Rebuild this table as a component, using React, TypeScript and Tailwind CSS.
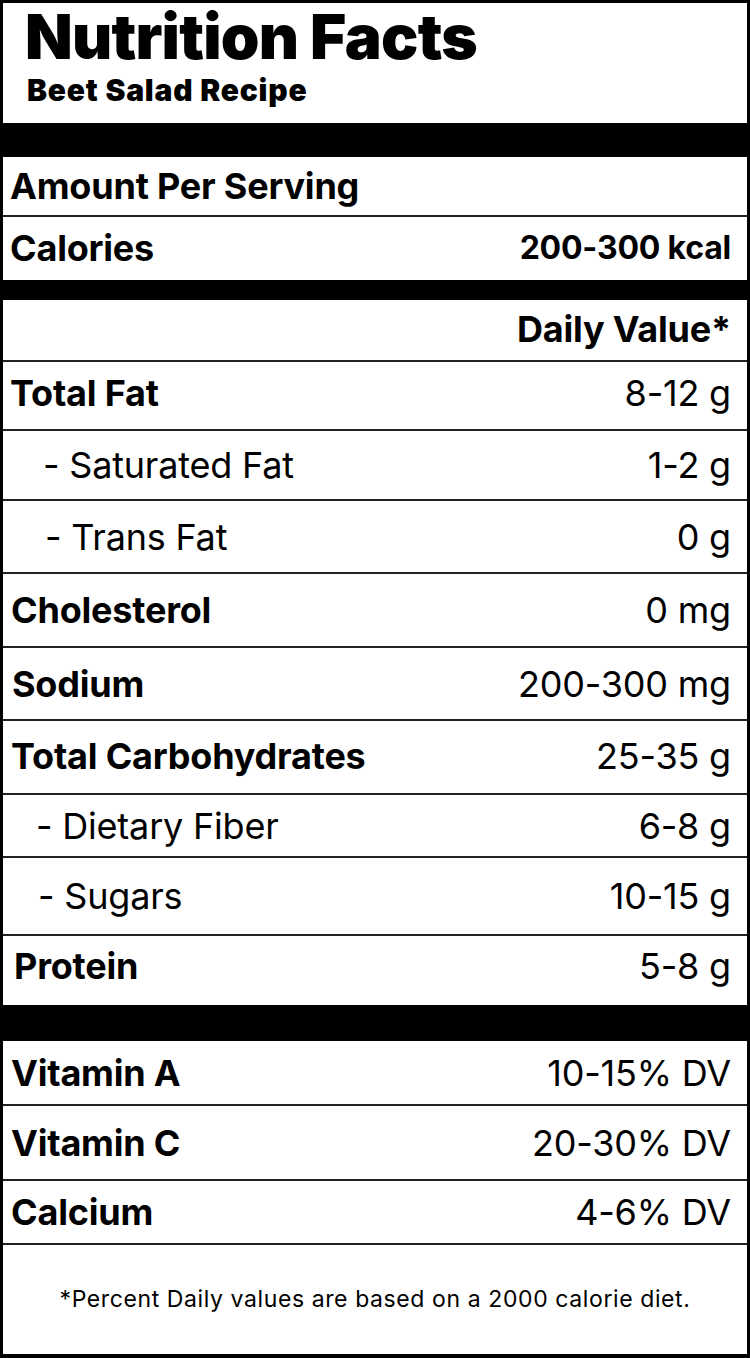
import React from 'react';

type Row = {
  label: string;
  value: string;
  bold: boolean;
  h: string; // row height class
  pad: string; // left padding + nudges
  line: boolean; // thin rule under the row
};

// Main nutrient rows, between the "Daily Value*" header and the protein bar
const nutrients: Row[] = [
  { label: 'Total Fat', value: '8-12 g', bold: true, h: 'h-[67px]', pad: 'pl-[7px] pb-[5px]', line: true },
  { label: '- Saturated Fat', value: '1-2 g', bold: false, h: 'h-[68px]', pad: 'pl-[40px]', line: true },
  { label: '- Trans Fat', value: '0 g', bold: false, h: 'h-[71px]', pad: 'pl-[42px]', line: true },
  { label: 'Cholesterol', value: '0 mg', bold: true, h: 'h-[72px]', pad: 'pl-[8px]', line: true },
  { label: 'Sodium', value: '200-300 mg', bold: true, h: 'h-[71px]', pad: 'pl-[9px]', line: true },
  { label: 'Total Carbohydrates', value: '25-35 g', bold: true, h: 'h-[72px]', pad: 'pl-[8px] pb-[3px]', line: true },
  { label: '- Dietary Fiber', value: '6-8 g', bold: false, h: 'h-[61px]', pad: 'pl-[33px]', line: true },
  { label: '- Sugars', value: '10-15 g', bold: false, h: 'h-[76px]', pad: 'pl-[35px]', line: true },
  { label: 'Protein', value: '5-8 g', bold: true, h: 'h-[69px]', pad: 'pl-[11px] pb-[9px]', line: false },
];

const vitamins: Row[] = [
  { label: 'Vitamin A', value: '10-15% DV', bold: true, h: 'h-[63px]', pad: 'pl-[8px]', line: true },
  { label: 'Vitamin C', value: '20-30% DV', bold: true, h: 'h-[73px]', pad: 'pl-[8px]', line: true },
  { label: 'Calcium', value: '4-6% DV', bold: true, h: 'h-[62px]', pad: 'pl-[8px]', line: true },
];

function FactRow({ row }: { row: Row }) {
  return (
    <>
      <div className={`flex items-center justify-between pr-[16px] ${row.h} ${row.pad}`}>
        <span className={`text-[36px] leading-none tracking-[-0.2px] ${row.bold ? 'font-bold' : 'font-normal'}`}>
          {row.label}
        </span>
        <span className="text-[36px] leading-none font-normal tracking-[-0.2px]">{row.value}</span>
      </div>
      {row.line && <div className="h-[2px] bg-[#222]" />}
    </>
  );
}

export default function App() {
  return (
    <div className="w-[750px] h-[1358px] bg-white text-black border-[3px] border-b-4 border-black flex flex-col font-['Inter',sans-serif]">
      {/* Header */}
      <div className="h-[120px] pl-[22px] flex flex-col">
        <h1 className="font-black text-[62px] leading-[68px] tracking-[-0.75px]">Nutrition Facts</h1>
        <p className="font-black text-[30px] leading-[32px] tracking-[0.8px] pl-[2px] pt-[3px]">Beet Salad Recipe</p>
      </div>

      <div className="h-[34px] bg-black" />

      <div className="h-[58px] flex items-center pl-[7px]">
        <span className="text-[36px] leading-none font-bold tracking-[-0.2px]">Amount Per Serving</span>
      </div>
      <div className="h-[2px] bg-[#222]" />
      <div className="h-[63px] flex items-center justify-between pl-[7px] pr-[16px] pb-[2px]">
        <span className="text-[36px] leading-none font-bold tracking-[-0.2px]">Calories</span>
        <span className="text-[32px] leading-none font-bold tracking-[-0.2px]">200-300 kcal</span>
      </div>

      <div className="h-[20px] bg-black" />

      <div className="h-[60px] flex items-center justify-end pr-[16px] pb-[2px]">
        <span className="text-[36px] leading-none font-bold tracking-[-0.2px]">Daily Value*</span>
      </div>
      <div className="h-[2px] bg-[#222]" />

      {nutrients.map((r) => (
        <FactRow key={r.label} row={r} />
      ))}

      <div className="h-[36px] bg-black" />

      {vitamins.map((r) => (
        <FactRow key={r.label} row={r} />
      ))}

      {/* Footnote */}
      <div className="flex-1 flex items-center justify-center">
        <p className="text-[23px] leading-none tracking-[0.6px]">
          *Percent Daily values are based on a 2000 calorie diet.
        </p>
      </div>
    </div>
  );
}
